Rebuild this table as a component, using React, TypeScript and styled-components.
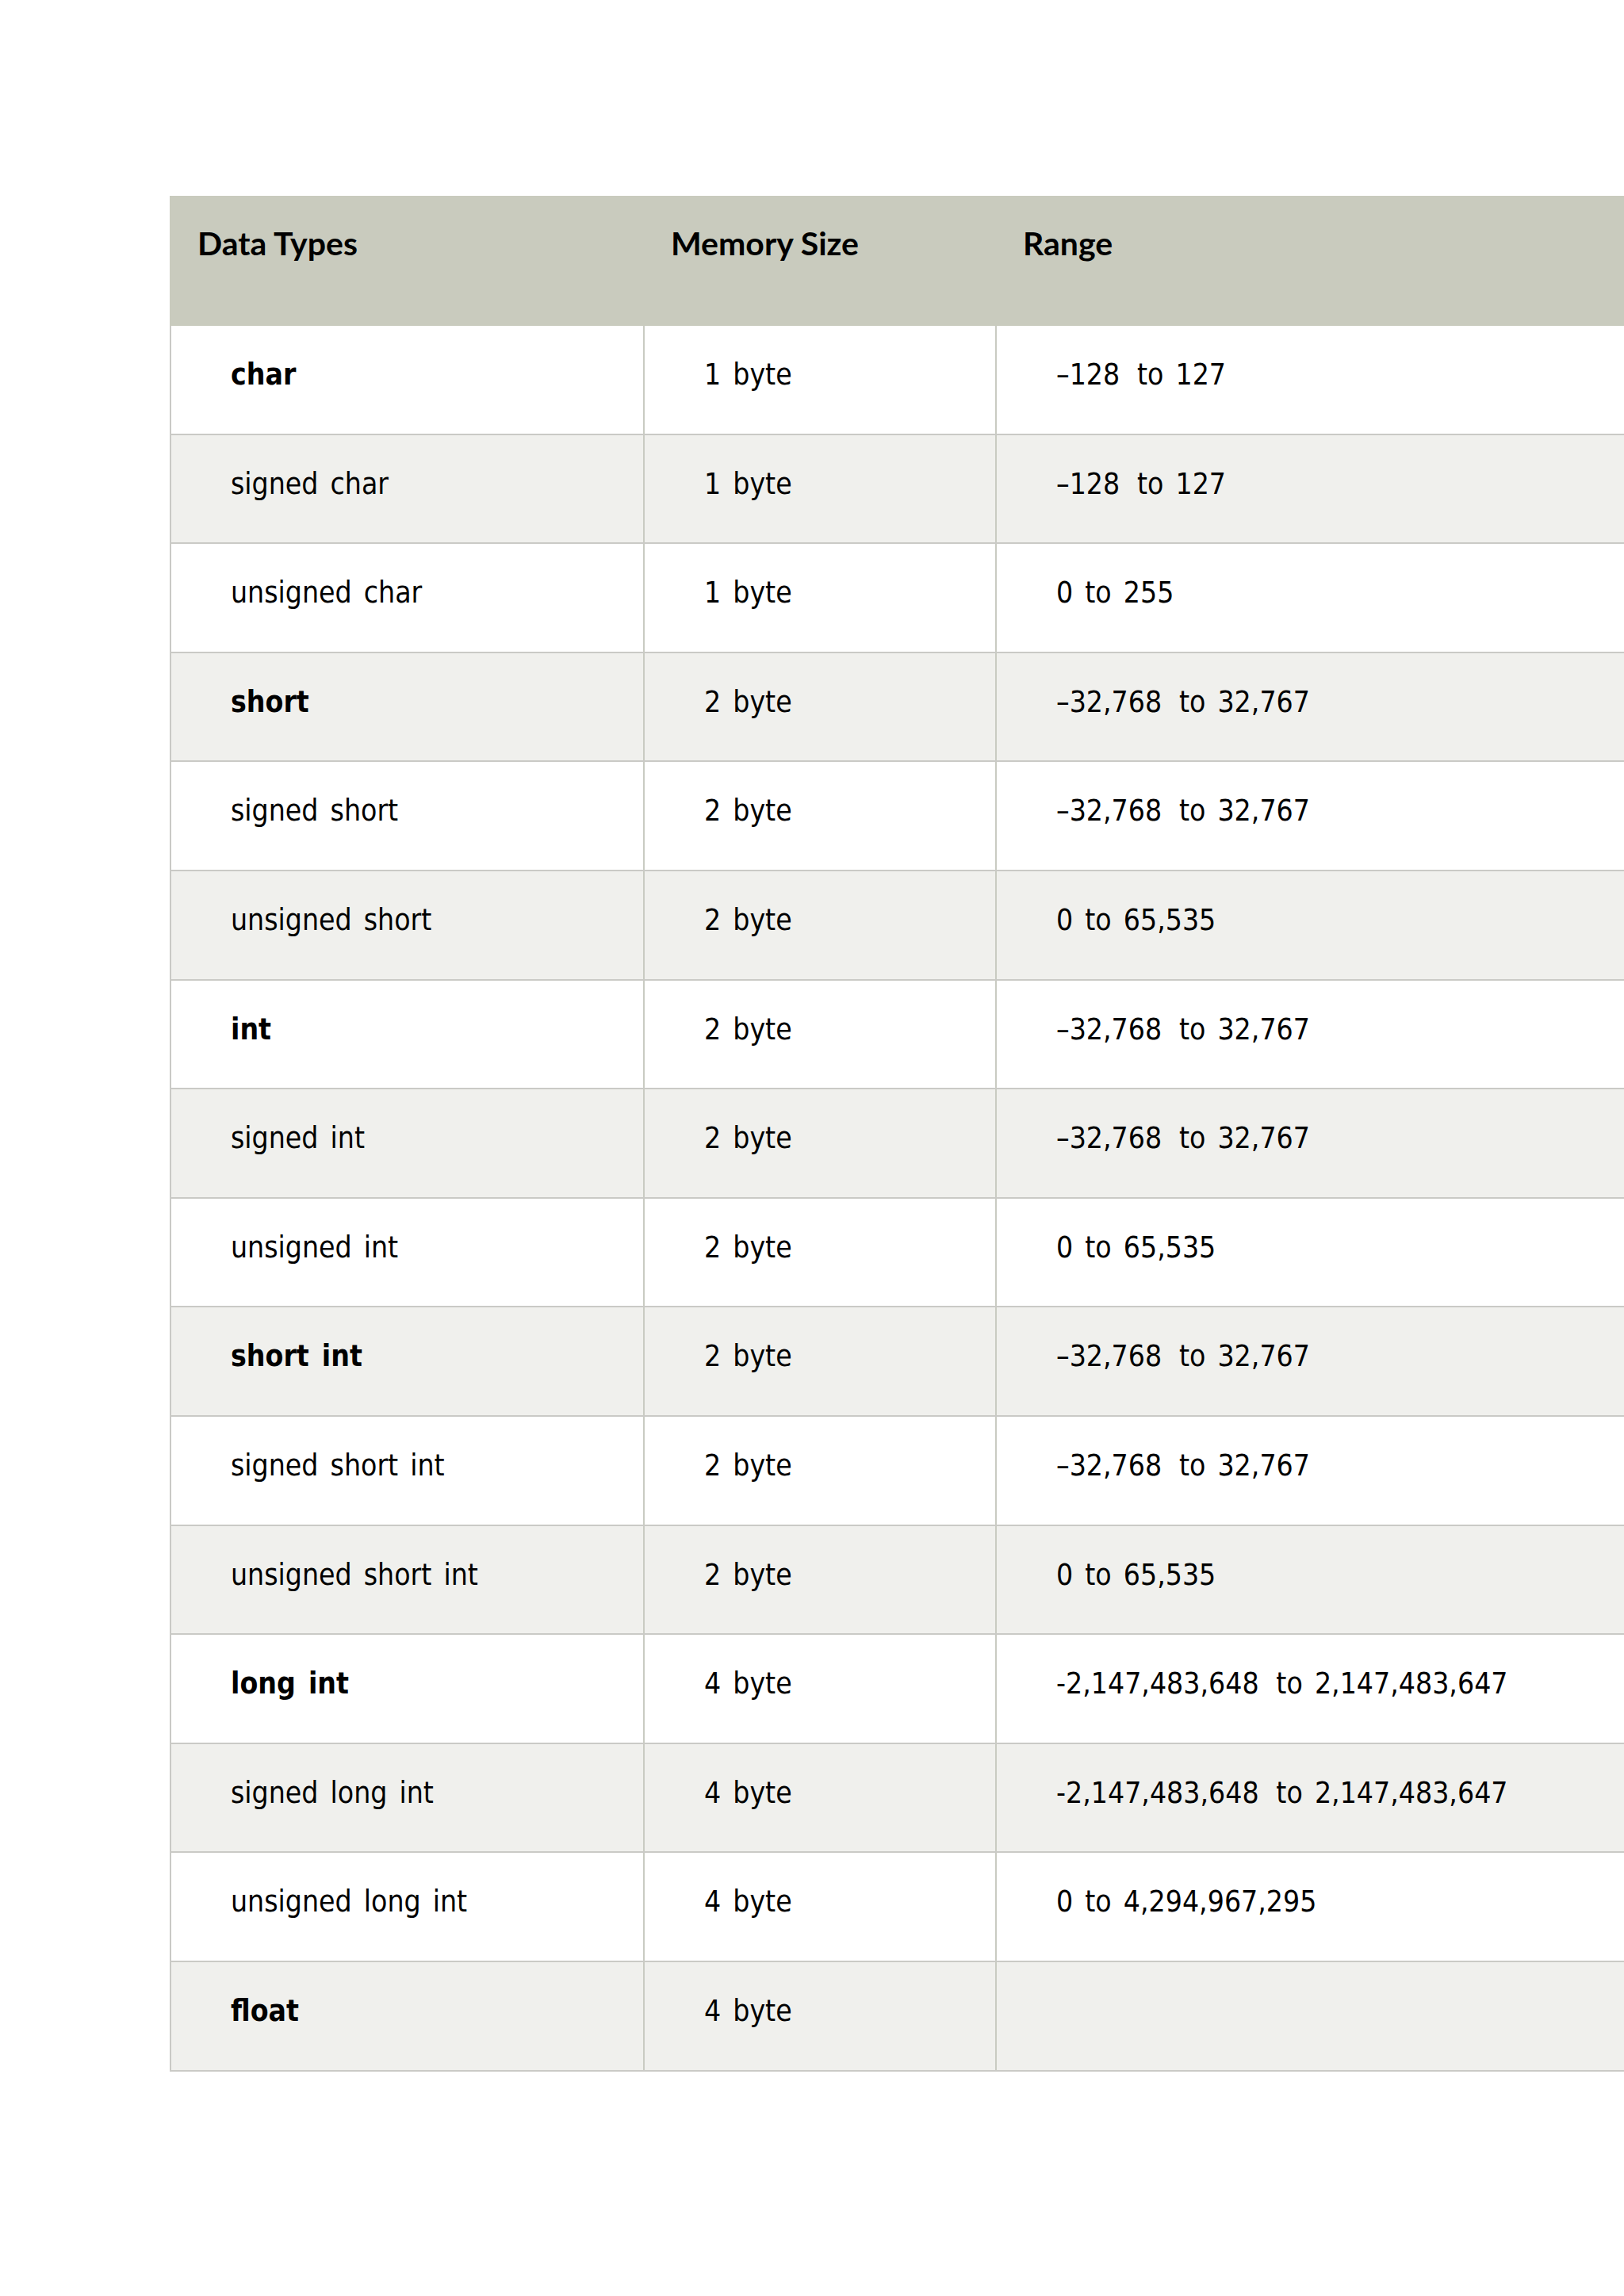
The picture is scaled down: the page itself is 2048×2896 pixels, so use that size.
import React from 'react';
import styled, { createGlobalStyle } from 'styled-components';

interface RowData {
  type: string;
  size: string;
  range: string;
  bold?: boolean;
}

// wider gap before "to" in the signed ranges, as in the source table
const gap = ' \u2009';

const rows: Array<RowData> = [
  { type: 'char', size: '1 byte', range: `–128${gap}to 127`, bold: true },
  { type: 'signed char', size: '1 byte', range: `–128${gap}to 127` },
  { type: 'unsigned char', size: '1 byte', range: '0 to 255' },
  { type: 'short', size: '2 byte', range: `–32,768${gap}to 32,767`, bold: true },
  { type: 'signed short', size: '2 byte', range: `–32,768${gap}to 32,767` },
  { type: 'unsigned short', size: '2 byte', range: '0 to 65,535' },
  { type: 'int', size: '2 byte', range: `–32,768${gap}to 32,767`, bold: true },
  { type: 'signed int', size: '2 byte', range: `–32,768${gap}to 32,767` },
  { type: 'unsigned int', size: '2 byte', range: '0 to 65,535' },
  { type: 'short int', size: '2 byte', range: `–32,768${gap}to 32,767`, bold: true },
  { type: 'signed short int', size: '2 byte', range: `–32,768${gap}to 32,767` },
  { type: 'unsigned short int', size: '2 byte', range: '0 to 65,535' },
  { type: 'long int', size: '4 byte', range: `-2,147,483,648${gap}to 2,147,483,647`, bold: true },
  { type: 'signed long int', size: '4 byte', range: `-2,147,483,648${gap}to 2,147,483,647` },
  { type: 'unsigned long int', size: '4 byte', range: '0 to 4,294,967,295' },
  { type: 'float', size: '4 byte', range: '', bold: true }
];

const GlobalStyle = createGlobalStyle`
  html, body {
    margin: 0;
    padding: 0;
    background: #ffffff;
    overflow: hidden;
  }
  body {
    font-family: "DejaVu Sans", "Liberation Sans", sans-serif;
    color: #000;
  }
`;

const Page = styled.div`
  width: 2048px;
  height: 2896px;
  padding-top: 247px;
  padding-left: 214px;
  box-sizing: border-box;
`;

const Table = styled.div`
  width: 1834px;
  display: flex;
  flex-direction: column;
`;

const HeaderRow = styled.div`
  display: grid;
  grid-template-columns: 598px 445px 1fr;
  height: 164px;
  background: #c9cbbe;
`;

const HeaderCell = styled.div<{ $pad: number }>`
  padding: 35px 0 0 ${(p) => p.$pad}px;
  font-family: Lato, "Open Sans", sans-serif;
  font-weight: 700;
  font-size: 41px;
  line-height: 1.2;
  color: #000;
`;

const Row = styled.div<{ $shade: boolean }>`
  display: grid;
  grid-template-columns: 597px 444px 1fr;
  height: 137.6px;
  box-sizing: border-box;
  border-left: 2px solid #cacac6;
  border-bottom: 2px solid #cacac6;
  background: ${(p) => (p.$shade ? '#f0f0ed' : '#ffffff')};
`;

const Cell = styled.div<{ $last?: boolean }>`
  padding: 40px 0 0 75px;
  box-sizing: border-box;
  border-right: ${(p) => (p.$last ? 'none' : '2px solid #c9cbc2')};
  overflow: hidden;
`;

const Text = styled.span<{ $bold?: boolean }>`
  display: inline-block;
  font-family: "DejaVu Sans", "Liberation Sans", sans-serif;
  font-size: 37px;
  line-height: 44px;
  font-weight: ${(p) => (p.$bold ? 700 : 400)};
  word-spacing: 5px;
  white-space: pre;
  transform: scaleX(0.9);
  transform-origin: left center;
`;

const App = () => {
  return (
    <Page>
      <GlobalStyle />
      <Table>
        <HeaderRow>
          <HeaderCell $pad={35}>Data Types</HeaderCell>
          <HeaderCell $pad={34}>Memory Size</HeaderCell>
          <HeaderCell $pad={33}>Range</HeaderCell>
        </HeaderRow>
        {rows.map((row, i) => (
          <Row key={i} $shade={i % 2 === 1}>
            <Cell>
              <Text $bold={row.bold}>{row.type}</Text>
            </Cell>
            <Cell>
              <Text>{row.size}</Text>
            </Cell>
            <Cell $last>
              <Text>{row.range}</Text>
            </Cell>
          </Row>
        ))}
      </Table>
    </Page>
  );
};

export default App;
